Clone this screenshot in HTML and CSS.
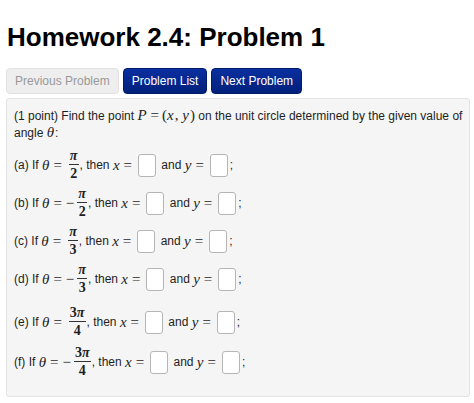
FILE: index.html
```html
<!DOCTYPE html>
<html lang="en">
<head>
  <meta charset="UTF-8">
  <title>Homework 2.4: Problem 1</title>
  <link rel="stylesheet" href="styles.css">
</head>
<body>
  <h1 class="title">Homework 2.4: Problem 1</h1>

  <div class="nav">
    <button class="nav-btn disabled">Previous Problem</button>
    <button class="nav-btn">Problem List</button>
    <button class="nav-btn">Next Problem</button>
  </div>

  <div class="problem">
    <p class="intro">(1 point) Find the point <span class="m"><i>P</i><span class="op">=</span>(<i>x</i>, <i>y</i>)</span> on the unit circle determined by the given value of angle <span class="m"><i>&theta;</i></span>:</p>

    <div class="row">(a) If <span class="m"><i>&theta;</i><span class="op">=</span></span><span class="frac"><span class="num"><i>&pi;</i></span><span class="den">2</span></span>, then <span class="m"><i>x</i><span class="op">=</span></span><span class="box"></span> and <span class="m"><i>y</i><span class="op">=</span></span><span class="box"></span>;</div>

    <div class="row">(b) If <span class="m"><i>&theta;</i><span class="op">=</span>&minus;</span><span class="frac"><span class="num"><i>&pi;</i></span><span class="den">2</span></span>, then <span class="m"><i>x</i><span class="op">=</span></span><span class="box"></span> and <span class="m"><i>y</i><span class="op">=</span></span><span class="box"></span>;</div>

    <div class="row">(c) If <span class="m"><i>&theta;</i><span class="op">=</span></span><span class="frac"><span class="num"><i>&pi;</i></span><span class="den">3</span></span>, then <span class="m"><i>x</i><span class="op">=</span></span><span class="box"></span> and <span class="m"><i>y</i><span class="op">=</span></span><span class="box"></span>;</div>

    <div class="row">(d) If <span class="m"><i>&theta;</i><span class="op">=</span>&minus;</span><span class="frac"><span class="num"><i>&pi;</i></span><span class="den">3</span></span>, then <span class="m"><i>x</i><span class="op">=</span></span><span class="box"></span> and <span class="m"><i>y</i><span class="op">=</span></span><span class="box"></span>;</div>

    <div class="row tall first-tall">(e) If <span class="m"><i>&theta;</i><span class="op">=</span></span><span class="frac"><span class="num">3<i>&pi;</i></span><span class="den">4</span></span>, then <span class="m"><i>x</i><span class="op">=</span></span><span class="box"></span> and <span class="m"><i>y</i><span class="op">=</span></span><span class="box"></span>;</div>

    <div class="row tall">(f) If <span class="m"><i>&theta;</i><span class="op">=</span>&minus;</span><span class="frac"><span class="num">3<i>&pi;</i></span><span class="den">4</span></span>, then <span class="m"><i>x</i><span class="op">=</span></span><span class="box"></span> and <span class="m"><i>y</i><span class="op">=</span></span><span class="box"></span>;</div>
  </div>
</body>
</html>
```

FILE: styles.css
```css
body {
  margin: 0;
  padding: 0 4px 0 6px;
  font-family: "Liberation Sans", Arial, sans-serif;
  font-size: 12px;
  color: #1e1e1e;
  background: #fff;
}
.title {
  font-size: 26px;
  font-weight: bold;
  color: #000;
  margin: 22px 0 0 1px;
  line-height: 30px;
}
.nav {
  display: flex;
  gap: 4px;
  margin-top: 16px;
}
.nav-btn {
  font-family: inherit;
  font-size: 12px;
  height: 26px;
  padding: 0 8px;
  border: 1px solid #001c66;
  border-radius: 4px;
  background: linear-gradient(#0b2fa0, #00207a);
  color: #fff;
}
.nav-btn.disabled {
  background: #eee;
  border-color: #e2e2e2;
  color: #999;
}
.problem {
  margin-top: 4px;
  background: #f5f5f5;
  border: 1px solid #e3e3e3;
  border-radius: 3px;
  padding: 9px 5px 14px 7px;
}
.intro {
  margin: 0 0 4px;
  line-height: 17px;
}
.intro i {
  padding-right: 1px;
}
.m {
  font-family: "Liberation Serif", "Times New Roman", serif;
  font-size: 15px;
  line-height: 1;
}
.op {
  margin: 0 4px;
}
.intro .op {
  margin: 0 3px;
}
.row {
  display: flex;
  align-items: center;
  white-space: pre;
  height: 38px;
}
.row.tall {
  height: 40px;
}
.row.first-tall {
  margin-top: 4px;
}
.frac {
  display: inline-flex;
  flex-direction: column;
  align-items: center;
  margin: 0 1px 0 3px;
  font-family: "Liberation Serif", serif;
  font-size: 14px;
  font-weight: bold;
}
.frac i {
  font-weight: bold;
}
.num {
  padding: 0 1px 1px;
  line-height: 14px;
  border-bottom: 1px solid #333;
}
.den {
  line-height: 14px;
  padding-top: 2px;
}
.box {
  display: inline-block;
  width: 16px;
  height: 21px;
  background: #fff;
  border: 1px solid #b5b5b5;
  border-radius: 3px;
  margin: 0 2px;
}
```
